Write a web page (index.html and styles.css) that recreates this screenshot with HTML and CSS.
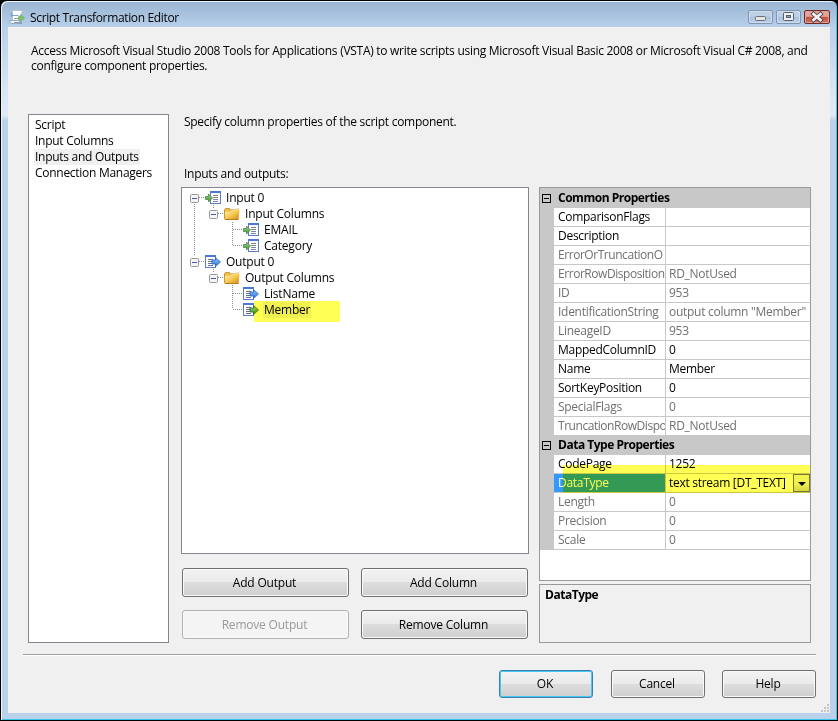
FILE: index.html
```
<!DOCTYPE html>
<html lang="en">
<head>
<meta charset="utf-8">
<title>Script Transformation Editor</title>
<link rel="stylesheet" href="styles.css">
</head>
<body>
<svg class="defs" aria-hidden="true">
  <defs>
    <linearGradient id="gFolder" x1="0" y1="0" x2="1" y2="1"><stop offset="0" stop-color="#fff0a8"/><stop offset=".5" stop-color="#f5c851"/><stop offset="1" stop-color="#d28c14"/></linearGradient>
    <linearGradient id="gBlue" x1="0" y1="0" x2="0" y2="1"><stop offset="0" stop-color="#8fc0ff"/><stop offset="1" stop-color="#2f74dc"/></linearGradient>
    <linearGradient id="gGreen" x1="0" y1="0" x2="0" y2="1"><stop offset="0" stop-color="#a4d68a"/><stop offset="1" stop-color="#3c8a34"/></linearGradient>
    <symbol id="input" viewBox="0 0 16 14">
      <rect x="5.500" y=".5" width="10" height="12" fill="#fff" stroke="#5a7cc8"/>
      <path d="M5 1h11" stroke="#4c78dc" stroke-width="2"/>
      <path d="M8 4.500h5M8 6.500h5M8 8.500h5M8 10.500h5" stroke="#7d869c"/>
      <path d="M.5 5.500h3V3l4 4-4 4V8.500h-3z" fill="url(#gGreen)" stroke="#4a8a42" stroke-width=".8"/>
    </symbol>
    <symbol id="output" viewBox="0 0 16 14">
      <rect x=".5" y=".5" width="10" height="12" fill="#fff" stroke="#5a7cc8"/>
      <path d="M0 1h11" stroke="#4c78dc" stroke-width="2"/>
      <path d="M3 4.500h5M3 6.500h5M3 8.500h5M3 10.500h5" stroke="#66718c"/>
      <path d="M7 5h3.500V2.500L15.500 7l-5 4.500V9H7z" fill="url(#gBlue)" stroke="#2f66c2" stroke-width=".8"/>
    </symbol>
    <symbol id="outputGreen" viewBox="0 0 16 14">
      <rect x=".5" y=".5" width="10" height="12" fill="#fff" stroke="#5a7cc8"/>
      <path d="M0 1h11" stroke="#4c78dc" stroke-width="2"/>
      <path d="M3 4.500h5M3 6.500h5M3 8.500h5M3 10.500h5" stroke="#66718c"/>
      <path d="M7 5h3.500V2.500L15.500 7l-5 4.500V9H7z" fill="url(#gGreen)" stroke="#2c6b2a" stroke-width=".8"/>
    </symbol>
    <symbol id="folder" viewBox="0 0 16 14">
      <path d="M.5 12V2.500l1-1h4l1.500 1.500h5l1 1.500V12z" fill="#f0be4e" stroke="#c9983a"/>
      <path d="M6 4L14.500 1.500v9L6 12z" fill="#fff0b0" stroke="#d9ad4e" stroke-width=".6"/>
      <path d="M1 12.500V5l5-.5 1.500-1 8-.5-1 9.500z" fill="url(#gFolder)"/>
      <path d="M1 12.500h13.500" stroke="#b07c20"/>
    </symbol>
    <symbol id="minus" viewBox="0 0 9 9">
      <rect x=".5" y=".5" width="8" height="8" rx="1" fill="#f4f4f4" stroke="#969696"/>
      <path d="M2 4.500h5" stroke="#3c5ab4"/>
    </symbol>
    <symbol id="box" viewBox="0 0 9 9">
      <rect x=".5" y=".5" width="8" height="8" fill="none" stroke="#000"/>
      <path d="M2 4.500h5" stroke="#000"/>
    </symbol>
  </defs>
</svg>
<div class="window">
  <header class="titlebar">
    <svg class="app-icon" viewBox="0 0 16 16">
      <path d="M3.500 1.500h11q-2 1-2 3v7h-9z" fill="#fafcff" stroke="#a9b8cc" stroke-width=".7"/>
      <path d="M.5 11.500h9.500q0 3 3 3H3q-2.500 0-2.500-3z" fill="#f2f6fa" stroke="#8698b0" stroke-width=".8"/>
      <path d="M2.500 4v4M2.500 6.500h7" stroke="#7ea0cf" stroke-width="1.200"/>
      <path d="M5 9.500h5M13 13.500h-8" stroke="#8fa0b6"/>
      <path d="M9.500 7.500h2V5.500l4 3.500-4 3.500v-2h-2z" fill="#80c266" stroke="#62a052" stroke-width=".6"/>
    </svg>
    <h1 class="title">Script Transformation Editor</h1>
    <div class="controls">
      <span class="control"><svg viewBox="0 0 23 12"><rect x="6.500" y="5.500" width="10" height="4" rx="1" fill="#e6e4dc" stroke="#66707c"/></svg></span>
      <span class="control"><svg viewBox="0 0 23 12"><rect x="6.500" y="1.500" width="10" height="8" rx="1" fill="#f0f0ec" stroke="#55606e"/><rect x="9.500" y="4.500" width="4" height="2" fill="#8fa7c4" stroke="#55606e"/></svg></span>
      <span class="control close"><svg viewBox="0 0 24 12"><path d="M8.500 3l7 6M15.500 3l-7 6" stroke="#5d4850" stroke-width="4.400" stroke-linecap="square"/><path d="M8.500 3l7 6M15.500 3l-7 6" stroke="#f6f2f2" stroke-width="2.600" stroke-linecap="square"/></svg></span>
    </div>
  </header>
  <main class="client">
    <p class="intro">Access Microsoft Visual Studio 2008 Tools for Applications (VSTA) to write scripts using Microsoft Visual Basic 2008 or Microsoft Visual C# 2008, and<br>configure component properties.</p>
    <div class="body">
      <ul class="nav">
        <li>Script</li>
        <li>Input Columns</li>
        <li><span class="nav-current">Inputs and Outputs</span></li>
        <li>Connection Managers</li>
      </ul>
      <section class="editor">
        <p class="hint">Specify column properties of the script component.</p>
        <p class="label">Inputs and outputs:</p>
        <div class="columns">
          <div class="left">
            <div class="tree">
              <svg class="wires" viewBox="0 0 90 130"><path d="M12.500 15v54M17 10.500h6M17 74.500h6M31.500 18v4M36 26.500h7M31.500 82v4M36 90.500h7M50.500 35v24M51 42.500h10M51 58.500h10M50.500 98v24M51 106.500h10M51 122.500h10" stroke="#8c8c8c" stroke-dasharray="1 1" fill="none"/></svg>
              <div class="node l0"><svg class="exp"><use href="#minus"/></svg><svg class="ico"><use href="#input"/></svg><span>Input 0</span></div>
              <div class="node l1"><svg class="exp"><use href="#minus"/></svg><svg class="ico"><use href="#folder"/></svg><span>Input Columns</span></div>
              <div class="node l2"><svg class="ico"><use href="#input"/></svg><span>EMAIL</span></div>
              <div class="node l2"><svg class="ico"><use href="#input"/></svg><span>Category</span></div>
              <div class="node l0"><svg class="exp"><use href="#minus"/></svg><svg class="ico"><use href="#output"/></svg><span>Output 0</span></div>
              <div class="node l1"><svg class="exp"><use href="#minus"/></svg><svg class="ico"><use href="#folder"/></svg><span>Output Columns</span></div>
              <div class="node l2"><svg class="ico"><use href="#output"/></svg><span>ListName</span></div>
              <div class="node l2"><svg class="ico"><use href="#outputGreen"/></svg><span class="selected">Member</span><i class="marker marker-node"></i></div>
            </div>
            <div class="actions">
              <button class="btn">Add Output</button>
              <button class="btn">Add Column</button>
              <button class="btn" disabled>Remove Output</button>
              <button class="btn">Remove Column</button>
            </div>
          </div>
          <div class="right">
            <div class="props">
              <div class="group first"><svg><use href="#box"/></svg><b>Common Properties</b></div>
              <div class="rows">
                <div class="row"><span>ComparisonFlags</span><span></span></div>
                <div class="row"><span>Description</span><span></span></div>
                <div class="row ro"><span class="snug">ErrorOrTruncationO</span><span></span></div>
                <div class="row ro"><span class="snug">ErrorRowDisposition</span><span>RD_NotUsed</span></div>
                <div class="row ro"><span>ID</span><span>953</span></div>
                <div class="row ro"><span>IdentificationString</span><span>output column "Member"</span></div>
                <div class="row ro"><span>LineageID</span><span>953</span></div>
                <div class="row"><span>MappedColumnID</span><span>0</span></div>
                <div class="row"><span>Name</span><span>Member</span></div>
                <div class="row"><span>SortKeyPosition</span><span>0</span></div>
                <div class="row ro"><span>SpecialFlags</span><span>0</span></div>
                <div class="row ro"><span class="snug">TruncationRowDispo</span><span>RD_NotUsed</span></div>
              </div>
              <div class="group"><svg><use href="#box"/></svg><b>Data Type Properties</b></div>
              <div class="rows">
                <div class="row"><span>CodePage</span><span>1252</span></div>
                <div class="row active"><span>DataType</span><span>text stream [DT_TEXT]</span><i class="drop"></i></div>
                <div class="row ro"><span>Length</span><span>0</span></div>
                <div class="row ro"><span>Precision</span><span>0</span></div>
                <div class="row ro"><span>Scale</span><span>0</span></div>
                <i class="marker marker-row"></i>
              </div>
            </div>
            <div class="help"><b>DataType</b></div>
          </div>
        </div>
      </section>
    </div>
    <footer class="footer">
      <button class="btn default">OK</button>
      <button class="btn">Cancel</button>
      <button class="btn">Help</button>
    </footer>
    <svg class="grip" viewBox="0 0 8 8"><path d="M6 0h2v2H6zM3 3h2v2H3zM6 3h2v2H6zM0 6h2v2H0zM3 6h2v2H3zM6 6h2v2H6z" fill="#c4c4c4"/></svg>
  </main>
</div>
</body>
</html>
```

FILE: styles.css
```
* { box-sizing: border-box; }
body {
  margin: 0;
  background: #000;
  font: 12px/16px "Open Sans", "Noto Sans", sans-serif;
  letter-spacing: -0.28px;
  color: #000;
}
p, h1, ul { margin: 0; padding: 0; font: inherit; }
ul { list-style: none; }
svg { display: block; flex: none; }
.defs { position: absolute; width: 0; height: 0; }

.window {
  width: 838px;
  height: 721px;
  border: 1px solid #000;
  border-radius: 7px 7px 0 0;
  padding: 0 6px 6px;
  background: linear-gradient(#98b4d2, #b9d1ea 27px, #d8e6f4 90px, #dfeaf6 114px, #b9d1ea 120px);
  box-shadow: inset 1px 1px 0 #e8f4fc, inset -1px -1px 0 #35c8e8;
}
.titlebar { display: flex; height: 26px; padding: 0 1px 0 2px; }
.app-icon { width: 16px; height: 16px; margin: 8px 5px 0 0; }
.title { flex: 1; padding-top: 9px; letter-spacing: -0.35px; }
.controls { display: flex; gap: 3px; padding-top: 9px; }
.control {
  width: 25px;
  height: 14px;
  border: 1px solid #7f95b3;
  border-radius: 2px;
  background: linear-gradient(#bdd0e6 45%, #a9c0dc 50%, #bdd2e8);
  box-shadow: inset 0 0 0 1px #cfdeef;
}
.control svg { width: 23px; height: 12px; }
.control.close {
  width: 26px;
  border-color: #6d2b28;
  background: linear-gradient(#e2a59a 45%, #c2513f 50%, #d0705c);
  box-shadow: inset 0 0 0 1px #e0a096;
}
.close svg { width: 24px; }

.client {
  position: relative;
  width: 822px;
  height: 686px;
  margin-left: 1px;
  background: #f0f0f0;
}
.intro { height: 87px; padding: 16px 0 0 23px; line-height: 15px; white-space: nowrap; }
.body { display: flex; gap: 12px; padding-left: 20px; }
.nav {
  width: 141px;
  height: 529px;
  padding: 2px 6px;
  border: 1px solid #828790;
  background: #fff;
}
.nav-current { display: inline-block; margin-left: -1px; padding: 0 1px; background: #f0f0f0; }
.editor { width: 630px; }
.hint { height: 52px; padding-left: 3px; }
.label { height: 21px; padding-left: 3px; }
.columns { display: flex; gap: 10px; }
.left { width: 348px; }
.tree {
  position: relative;
  height: 367px;
  padding: 2px 0;
  border: 1px solid #828790;
  background: #fff;
}
.wires { position: absolute; left: 0; top: -1px; width: 90px; height: 130px; }
.node { position: relative; display: flex; align-items: center; height: 16px; letter-spacing: -0.22px; }
.exp { width: 9px; height: 9px; margin-right: 6px; }
.ico { width: 16px; height: 14px; margin-right: 4px; }
.node span { padding: 0 1px; height: 16px; }
.l0 { padding-left: 8px; }
.l1 { padding-left: 27px; }
.l2 { padding-left: 61px; }
.selected { background: #f0f0f0; }
.marker { position: absolute; background: #ffff55; mix-blend-mode: multiply; }
.marker-node { left: 72px; top: -1px; width: 86px; height: 21px; }

.actions { display: grid; grid-template-columns: 167px 167px; gap: 13px 12px; padding: 14px 0 0 1px; }
.btn {
  height: 29px;
  padding: 0 2px 0 0;
  border: 1px solid #707070;
  border-radius: 3px;
  background: linear-gradient(#f2f2f2, #ebebeb 48%, #dddddd 50%, #cfcfcf);
  box-shadow: inset 0 0 0 1px #fafafa;
  font: inherit;
  letter-spacing: -0.2px;
  color: #000;
}
.btn:disabled { border-color: #adb2b5; background: #f4f4f4; color: #9a9a9a; }

.right { width: 272px; }
.props { height: 394px; border: 1px solid #999; background: #fff; }
.group { display: flex; align-items: center; height: 19px; padding: 0 0 1px 2px; background: #c8c8c8; }
.group.first { height: 20px; padding-bottom: 0; }
.group svg { width: 9px; height: 9px; margin-right: 7px; }
b { letter-spacing: -0.48px; }
.rows { position: relative; padding-left: 14px; background: #c8c8c8; }
.row {
  display: grid;
  grid-template-columns: 112px 1fr;
  height: 19px;
  border-bottom: 1px solid #c8c8c8;
  background: #fff;
  line-height: 18px;
  position: relative;
}
.row span { overflow: hidden; padding-left: 3px; white-space: nowrap; }
.row span:first-child { padding-left: 4px; border-right: 1px solid #c8c8c8; }
.row .snug { letter-spacing: -0.45px; }
.ro { color: #707070; }
.active span:first-child { background: #3399ff; color: #fff; }
.drop {
  position: absolute;
  right: 0;
  top: 0;
  width: 17px;
  height: 18px;
  border: 1px solid #777;
  background: linear-gradient(#f2f2f2 50%, #d5d5d5);
}
.drop::after {
  content: "";
  position: absolute;
  left: 4px;
  top: 7px;
  border: 4px solid transparent;
  border-top-color: #000;
  border-bottom: 0;
}
.marker-row { left: 23px; right: 0; top: 10px; height: 28px; }
.help { height: 59px; margin-top: 3px; padding: 2px 5px; border: 1px solid #999; }

.footer {
  display: flex;
  justify-content: flex-end;
  gap: 17px;
  margin: 11px 14px 0 15px;
  padding-top: 15px;
  border-top: 1px solid #a0a0a0;
  box-shadow: inset 0 1px 0 #fff;
}
.footer .btn { width: 94px; height: 28px; }
.footer .default { margin-right: 1px; border-color: #3c7fb1; box-shadow: inset 0 0 0 1px #46c8f0; }
.grip { position: absolute; right: 1px; bottom: 1px; width: 8px; height: 8px; }
```
